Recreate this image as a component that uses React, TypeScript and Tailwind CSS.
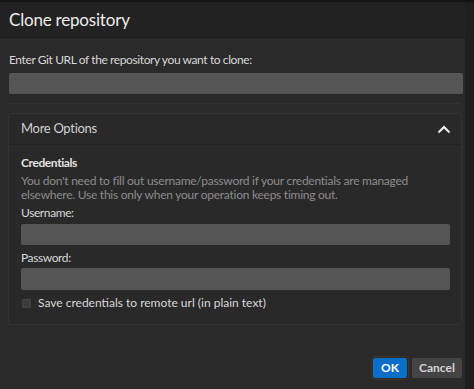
export default function App() {
  return (
    <div className="w-[474px] h-[389px] bg-[#1f1f1f] flex flex-col overflow-hidden" style={{ fontFamily: 'Lato, "Noto Sans", sans-serif' }}>
      <div className="h-[2px] bg-[#141414]" />
      <div className="w-[465px] flex-1 flex flex-col bg-[#2a2a2a]">
        {/* header */}
        <div className="h-[36px] bg-[#222222] flex items-center px-[9px] border-b border-[#1c1c1c]">
          <span className="text-[17px] tracking-[-0.2px] text-[#ececec] leading-none">Clone repository</span>
        </div>

        <div className="px-[9px] pt-[14px] flex flex-col text-[12px] tracking-[-0.4px]">
          <label className="text-[#d8d8d8] leading-[16px]">Enter Git URL of the repository you want to clone:</label>
          <div className="mt-[5px] h-[21px] w-[454px] bg-[#555555] rounded-[2px]" />
          <div className="mt-[9px] h-px bg-[#323232] -mr-[4px]" />

          {/* more options panel */}
          <div className="mt-[9px] -ml-px w-[454px] border border-[#333333] rounded-[3px] bg-[#292929] flex flex-col">
            <div className="h-[31px] flex items-center justify-between pl-[12px] pr-[10px] border-b border-[#222222]">
              <span className="text-[13px] tracking-[-0.3px] text-[#d0d0d0]">More Options</span>
              <svg width="14" height="9" viewBox="0 0 14 9" fill="none">
                <path d="M1.5 7.5 L7 2 L12.5 7.5" stroke="#f0f0f0" strokeWidth="2" />
              </svg>
            </div>
            <div className="pl-[12px] pr-[11px] pt-[10px] pb-[13px] flex flex-col">
              <span className="font-bold text-[#e2e2e2] leading-[16px]">Credentials</span>
              <p className="mt-[3px] text-[#8c8c8c] leading-[14px] tracking-[-0.25px]">
                You don't need to fill out username/password if your credentials are managed
                <br />
                elsewhere. Use this only when your operation keeps timing out.
              </p>
              <span className="mt-[3px] text-[#d8d8d8] leading-[16px]">Username:</span>
              <div className="mt-[3px] h-[21px] bg-[#555555] rounded-[2px]" />
              <span className="mt-[5px] text-[#d8d8d8] leading-[16px]">Password:</span>
              <div className="mt-[2px] h-[22px] bg-[#555555] rounded-[2px]" />
              <label className="mt-[5px] flex items-center gap-[7px]">
                <span className="ml-px w-[9px] h-[9px] bg-[#3c3c3c] border border-[#464646] rounded-[1px]" />
                <span className="text-[#d8d8d8] leading-[16px] text-[12px] tracking-[0px]">Save credentials to remote url (in plain text)</span>
              </label>
            </div>
          </div>
        </div>

        <div className="mt-auto mb-[11px] pr-[3px] flex justify-end gap-[5px]">
          <button className="w-[34px] h-[20px] bg-[#0c6ec9] text-white text-[12px] font-bold rounded-[2px] outline-1 outline-dotted outline-[#5a3a20] outline-offset-1">OK</button>
          <button className="w-[50px] h-[20px] bg-[#444444] text-[#d4d4d4] text-[12px] font-bold rounded-[2px]">Cancel</button>
        </div>
      </div>
    </div>
  )
}
